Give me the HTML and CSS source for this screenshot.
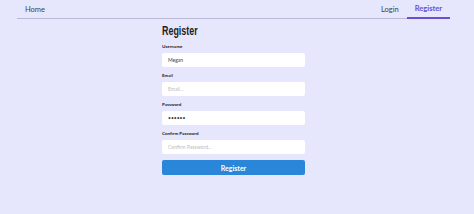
FILE: index.html
```html
<!DOCTYPE html>
<html lang="en">
<head>
  <meta charset="UTF-8">
  <meta name="viewport" content="width=device-width, initial-scale=1.0">
  <title>Register</title>
  <link rel="stylesheet" href="styles.css">
</head>
<body>
  <!-- Top navigation -->
  <nav class="navbar">
    <a href="#" class="nav-link">Home</a>
    <div class="nav-right">
      <a href="#" class="nav-link">Login</a>
      <a href="#" class="nav-link active">Register</a>
    </div>
  </nav>

  <!-- Register form -->
  <main class="register">
    <h1>Register</h1>
    <form class="register-form">
      <label for="username">Username</label>
      <input type="text" id="username" value="Megan">

      <label for="email">Email</label>
      <input type="email" id="email" placeholder="Email...">

      <label for="password">Password</label>
      <input type="password" id="password" value="secret">

      <label for="confirm">Confirm Password</label>
      <input type="password" id="confirm" placeholder="Confirm Password...">

      <button type="submit" class="register-btn">Register</button>
    </form>
  </main>
</body>
</html>
```

FILE: styles.css
```css
* {
  margin: 0;
  padding: 0;
  box-sizing: border-box;
}

body {
  font-family: Lato, "Liberation Sans", sans-serif;
  background-color: #e6e6fc;
  height: 100vh;
}

.navbar {
  display: flex;
  justify-content: space-between;
  align-items: stretch;
  margin: 0 24px 0 17px;
  height: 19px;
  border-bottom: 1px solid #b9b8d6;
}

.nav-right {
  display: flex;
}

.nav-link {
  display: flex;
  align-items: center;
  padding: 0 8px;
  font-size: 7.5px;
  color: #444;
  text-decoration: none;
}

.nav-link.active {
  color: #6c4fd0;
  font-weight: bold;
  border-bottom: 2px solid #6c4fd0;
  margin-bottom: -1px;
}

.register {
  width: 143px;
  margin: 4px auto 0 162px;
}

/* the heading font is a tight condensed face, squeeze a bold sans */
.register h1 {
  font-family: "Liberation Sans", sans-serif;
  font-size: 13.5px;
  color: #222;
  margin-bottom: 6px;
  transform: scaleX(0.66);
  transform-origin: left center;
}

.register-form {
  display: flex;
  flex-direction: column;
}

.register-form label {
  font-size: 4.5px;
  font-weight: bold;
  color: #222;
  margin-bottom: 4px;
}

.register-form input {
  height: 14px;
  border: none;
  border-radius: 2px;
  background-color: #fff;
  padding: 0 6px;
  font-family: Lato, sans-serif;
  font-size: 5px;
  color: #444;
  margin-bottom: 6px;
}

.register-form input::placeholder {
  color: #bbb;
}

.register-btn {
  height: 15px;
  border: none;
  border-radius: 2px;
  background-color: #2a86d8;
  color: #fff;
  font-family: Lato, sans-serif;
  font-weight: bold;
  font-size: 7px;
  cursor: pointer;
}
```
